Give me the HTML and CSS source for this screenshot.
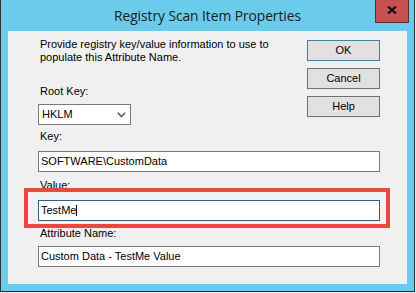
FILE: index.html
```html
<!DOCTYPE html>
<html>
<head>
<meta charset="utf-8">
<link rel="stylesheet" href="styles.css">
</head>
<body>
<div class="window">
  <div class="titlebar">
    <span class="spacer"></span>
    <div class="title">Registry Scan Item Properties</div>
    <div class="close">
      <svg width="10" height="8" viewBox="0 0 10 8"><path d="M1 0.5 L9 7.5 M9 0.5 L1 7.5" stroke="#141414" stroke-width="2.3" fill="none"/></svg>
    </div>
  </div>
  <div class="client">
    <div class="top">
      <div class="left">
        <p class="desc">Provide registry key/value information to use to<br>populate this Attribute Name.</p>
        <div class="label root-label">Root Key:</div>
        <div class="combo">
          <span>HKLM</span>
          <svg width="9" height="6" viewBox="0 0 9 6"><path d="M0.8 0.8 L4.5 4.6 L8.2 0.8" stroke="#5a5a5a" stroke-width="1.6" fill="none"/></svg>
        </div>
      </div>
      <div class="buttons">
        <div class="btn default">OK</div>
        <div class="btn">Cancel</div>
        <div class="btn">Help</div>
      </div>
    </div>
    <div class="label key-label">Key:</div>
    <div class="textbox key-box">SOFTWARE\CustomData</div>
    <div class="label value-label">Value:</div>
    <div class="textbox value-box focused">TestMe<span class="caret"></span></div>
    <div class="label attr-label">Attribute Name:</div>
    <div class="textbox attr-box">Custom Data - TestMe Value</div>
    <div class="highlight"></div>
  </div>
</div>
</body>
</html>
```
FILE: styles.css
```css
html, body {
  margin: 0;
  padding: 0;
}
body {
  background: #ececec;
  width: 416px;
  height: 293px;
  overflow: hidden;
}
.window {
  width: 415px;
  height: 292px;
  box-sizing: border-box;
  background: #6acbeb;
  border: 1px solid #2e2e2e;
  border-top: none;
  display: flex;
  flex-direction: column;
}
.titlebar {
  height: 31px;
  flex: none;
  display: grid;
  grid-template-columns: 1fr auto 1fr;
}
.title {
  font-family: "Open Sans", "Noto Sans", sans-serif;
  font-size: 13.8px;
  letter-spacing: -0.05px;
  line-height: 20px;
  padding-top: 6px;
  color: #1b1b1b;
  white-space: nowrap;
}
.close {
  justify-self: end;
  align-self: start;
  margin-right: 5px;
  width: 34px;
  height: 23px;
  box-sizing: border-box;
  background: #c75050;
  border: 1px solid #4b3434;
  border-top: none;
  display: flex;
  align-items: center;
  justify-content: center;
  padding-bottom: 2px;
}
.close svg { display: block; }
.client {
  flex: none;
  margin: 0 7px;
  height: 253px;
  background: #f0f0f0;
  position: relative;
  box-sizing: border-box;
  padding: 7px 27px 0 30px;
  font-family: "Liberation Sans", Arial, sans-serif;
  font-size: 11px;
  line-height: 13px;
  color: #000;
}
.top {
  display: flex;
  justify-content: space-between;
  align-items: flex-start;
}
.desc {
  margin: 0 0 0 2px;
  white-space: nowrap;
}
.label {
  padding-left: 2px;
  white-space: nowrap;
}
.root-label { margin-top: 21px; }
.combo {
  margin-top: 6px;
  width: 93px;
  height: 21px;
  box-sizing: border-box;
  border: 1px solid #7a7a7a;
  background: #fff;
  display: flex;
  align-items: center;
  justify-content: space-between;
  padding: 0 4px 0 3px;
  line-height: 19px;
}
.combo svg { display: block; }
.buttons {
  margin-top: 2px;
  display: flex;
  flex-direction: column;
  gap: 7px;
}
.btn {
  width: 73px;
  height: 21px;
  box-sizing: border-box;
  border: 1px solid #707070;
  background: #e1e1e1;
  text-align: center;
  line-height: 19px;
}
.btn.default {
  border-color: #3c7fb1;
}
.textbox {
  height: 21px;
  box-sizing: border-box;
  border: 1px solid #7a7a7a;
  background: #fff;
  padding: 0 2px;
  line-height: 19px;
  white-space: nowrap;
}
.textbox.focused {
  border-color: #2f5f8c;
}
.caret {
  display: inline-block;
  width: 0;
  height: 11px;
  border-left: 1px solid #000;
  vertical-align: -2px;
}
.key-label { margin-top: 5px; }
.key-box { margin-top: 8px; }
.value-label { margin-top: 7px; }
.value-box { margin-top: 8px; }
.attr-label { margin-top: 6px; }
.attr-box { margin-top: 6px; }
.highlight {
  position: absolute;
  left: 16px;
  top: 157px;
  width: 366px;
  height: 40px;
  box-sizing: border-box;
  border: 4px solid #e8493f;
}
```
